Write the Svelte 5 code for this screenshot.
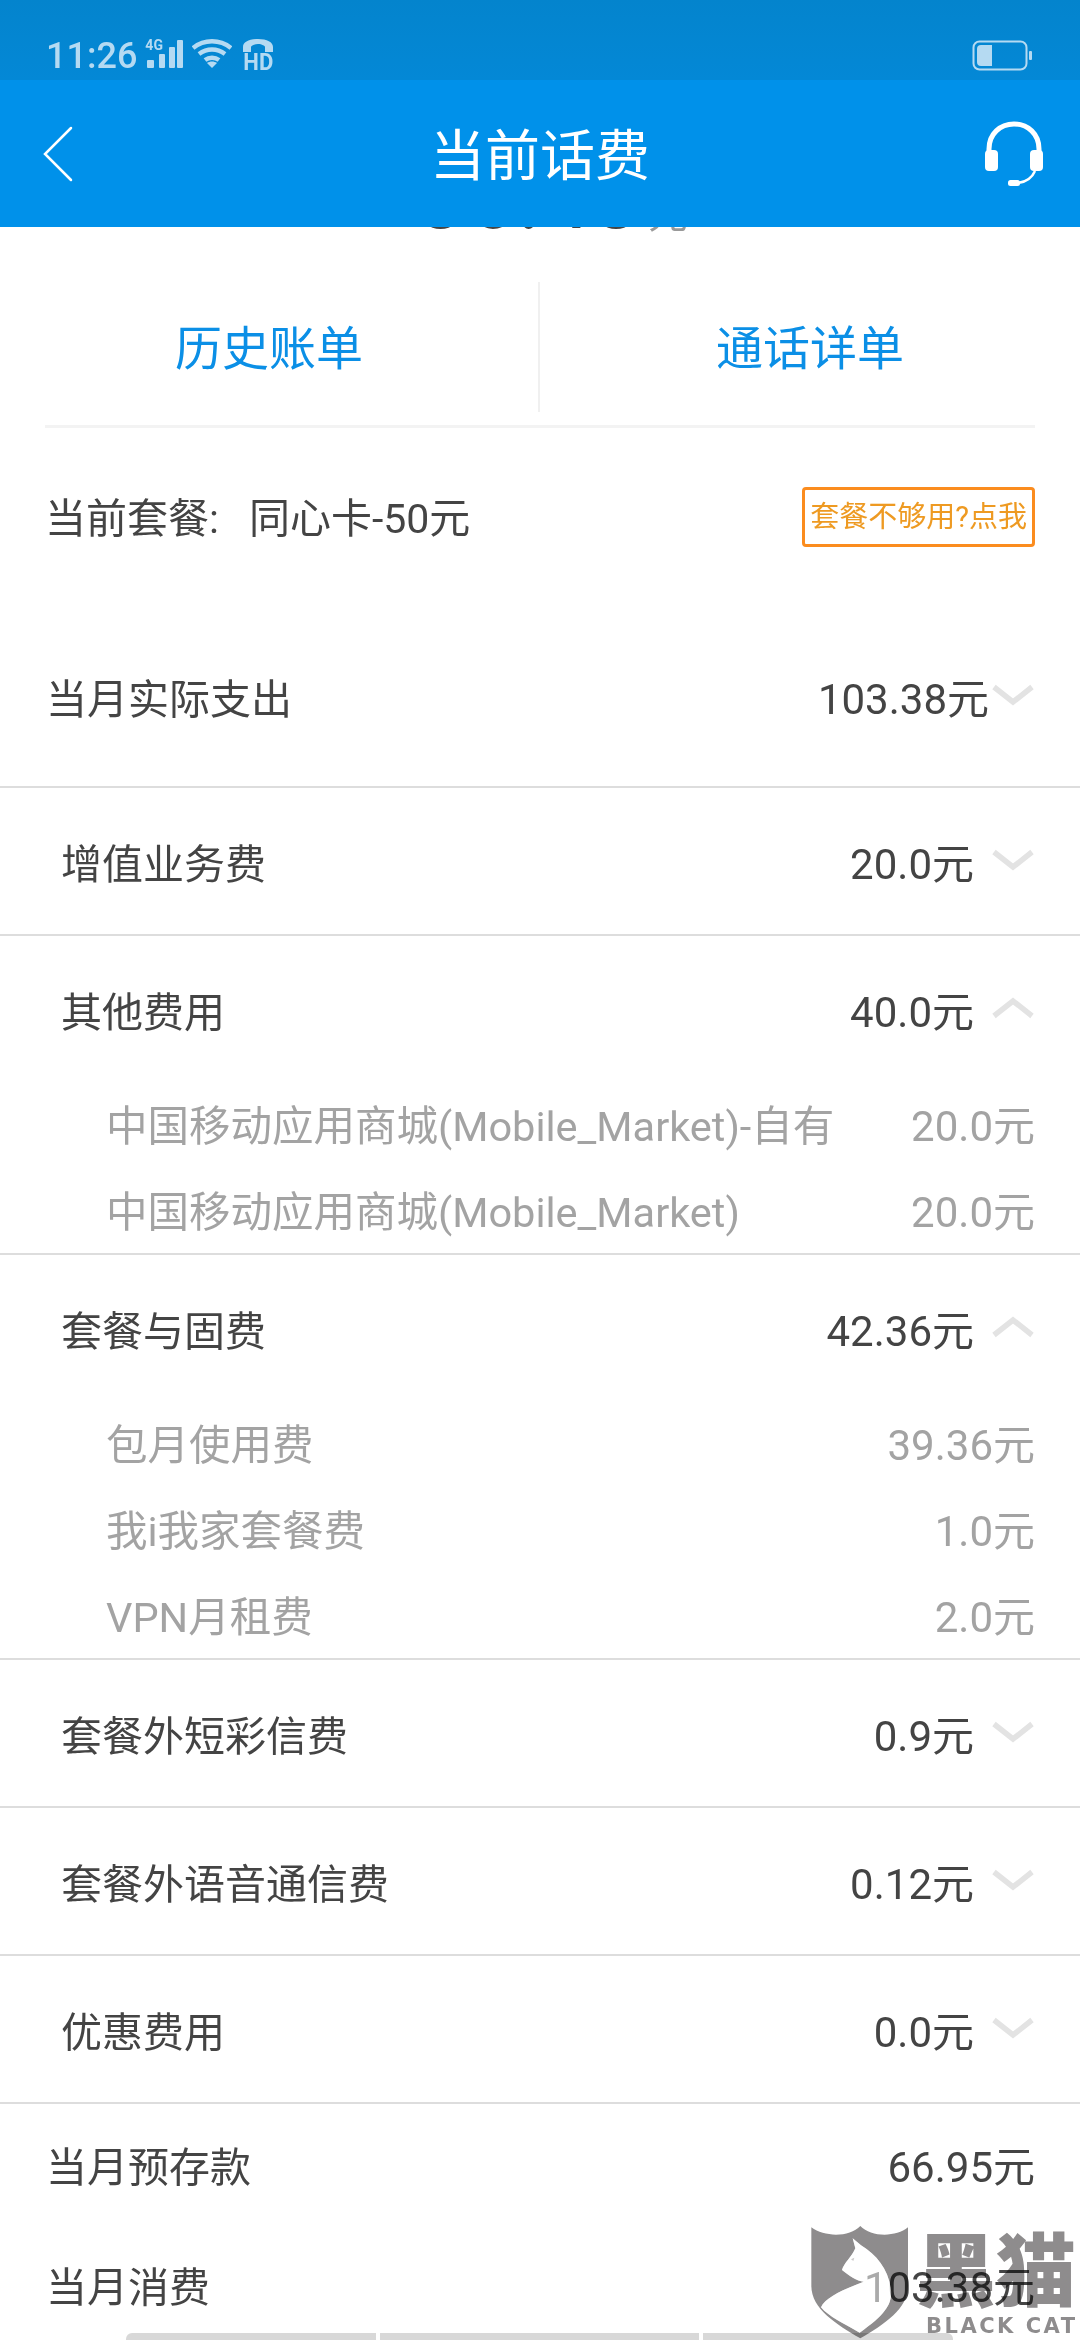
<script>
  const groups = [
    { name: '增值业务费', value: '20.0元', open: false },
    {
      name: '其他费用', value: '40.0元', open: true,
      items: [
        ['中国移动应用商城(Mobile_Market)-自有', '20.0元'],
        ['中国移动应用商城(Mobile_Market)', '20.0元'],
      ],
    },
    {
      name: '套餐与固费', value: '42.36元', open: true,
      items: [
        ['包月使用费', '39.36元'],
        ['我i我家套餐费', '1.0元'],
        ['VPN月租费', '2.0元'],
      ],
    },
    { name: '套餐外短彩信费', value: '0.9元', open: false },
    { name: '套餐外语音通信费', value: '0.12元', open: false },
    { name: '优惠费用', value: '0.0元', open: false },
  ]

  const catPath = 'M457 415L482 436C530 465 565 510 572 570C575 610 560 640 478 698C430 670 385 650 362 622C375 590 440 565 490 545C470 545 445 525 425 510C430 490 455 470 465 445Z'
</script>

{#snippet chevron(up)}
  <svg class="chev" width="44" height="24" viewBox="0 0 44 24" aria-hidden="true">
    <path d={up ? 'M3 20L22 5l19 15' : 'M3 4l19 15L41 4'} fill="none" stroke="#e3e3e3" stroke-width="5.5" />
  </svg>
{/snippet}

<div class="page">
  <div class="status">
    <span class="time">11:26</span>
    <span class="net">
      <span class="g4">4G</span>
      <svg width="36" height="28" viewBox="0 0 36 28" fill="#b5daf2" aria-hidden="true">
        <rect x="0" y="20" width="7" height="8" rx="1" />
        <rect x="12" y="14" width="6" height="14" rx="1" />
        <rect x="22" y="7" width="6" height="21" rx="1" />
        <rect x="30" y="0" width="6" height="28" rx="1" />
      </svg>
    </span>
    <svg class="wifi" width="40" height="30" viewBox="0 0 40 30" fill="none" stroke="#b5daf2" stroke-width="4.5" aria-hidden="true">
      <path d="M1 9c11-9 27-9 38 0" />
      <path d="M7 15c8-6 18-6 26 0" />
      <path d="M13 21c4-3 10-3 14 0" />
      <path d="M20 29l-5-5c3-2 7-2 10 0z" fill="#b5daf2" stroke="none" />
    </svg>
    <span class="hd">
      <svg width="30" height="13" viewBox="0 0 30 13" fill="#b5daf2" aria-hidden="true">
        <path d="M0 13V8C0 3 6 0 15 0s15 3 15 8v5h-8V8c0-1-3-3-7-3S8 7 8 8v5z" />
      </svg>
      <span>HD</span>
    </span>
    <svg class="battery" width="60" height="31" viewBox="0 0 60 31" aria-hidden="true">
      <rect x="1.5" y="1.5" width="53" height="28" rx="6" fill="none" stroke="#b5daf2" stroke-width="2" />
      <path d="M9 5h11v21H9a4 4 0 0 1-4-4V9a4 4 0 0 1 4-4z" fill="#b5daf2" />
      <rect x="57" y="11" width="3" height="9" rx="1" fill="#b5daf2" />
    </svg>
  </div>

  <header class="nav">
    <svg class="back" width="32" height="56" viewBox="0 0 32 56" fill="none" stroke="#fff" stroke-width="2.5" stroke-linecap="round" aria-hidden="true">
      <path d="M28 2L2 28l26 26" />
    </svg>
    <h1>当前话费</h1>
    <svg class="headset" width="60" height="66" viewBox="0 0 60 66" fill="#fff" aria-hidden="true">
      <path d="M5 30V28C5 13 16 3 30 3s25 10 25 25v2" fill="none" stroke="#fff" stroke-width="5" />
      <rect x="1" y="29" width="13" height="21" rx="4" />
      <rect x="46" y="29" width="13" height="21" rx="4" />
      <path d="M51 50c-3 7-9 11-17 12" fill="none" stroke="#fff" stroke-width="2.5" />
      <rect x="24" y="59" width="12" height="6" rx="2.5" />
    </svg>
  </header>

  <div class="peek"><span>36.43<small>元</small></span></div>

  <div class="tabs">
    <div class="tab">历史账单</div>
    <div class="tab">通话详单</div>
  </div>

  <div class="plan">
    <span class="plan-name"><span>当前套餐:</span><span>同心卡-50元</span></span>
    <span class="tip">套餐不够用?点我</span>
  </div>

  <div class="row total">
    <span>当月实际支出</span>
    <span class="amount">103.38元</span>
    {@render chevron(false)}
  </div>

  {#each groups as g}
    <section class="group">
      <div class="row head">
        <span>{g.name}</span>
        <span class="amount">{g.value}</span>
        {@render chevron(g.open)}
      </div>
      {#if g.items}
        <ul>
          {#each g.items as [label, val]}
            <li><span>{label}</span><span class="amount">{val}</span></li>
          {/each}
        </ul>
      {/if}
    </section>
  {/each}

  <div class="summary">
    <div><span>当月预存款</span><span class="amount">66.95元</span></div>
    <div><span>当月消费</span><span class="amount">103.38元</span></div>
  </div>

  <div class="bars"><i></i><i></i><i></i></div>

  <div class="mark" aria-hidden="true">
    <svg class="shield" width="98" height="115" viewBox="333 375 292 345">
      <path fill-rule="evenodd" d="M333 382c40 30 115 30 147-4 32 34 107 34 143 4v175c0 70-70 115-143 158-73-43-147-88-147-158z{catPath}" fill="#8e8c8d" />
      <path d="M452 478l10-5-3 10z" fill="#8e8c8d" />
    </svg>
    <svg class="cat" width="98" height="115" viewBox="333 375 292 345">
      <path d={catPath} fill="#fff" fill-opacity="0.55" />
    </svg>
    <div class="mark-text">
      <span class="cn">黑猫</span>
      <span class="en">BLACK CAT</span>
    </div>
  </div>
</div>

<style>
  :global(body) {
    margin: 0;
    background: #fff;
  }

  .page {
    position: relative;
    width: 1080px;
    height: 2340px;
    overflow: hidden;
    background: #fff;
    color: #444;
    font-family: Roboto, "Noto Sans CJK SC", sans-serif;
  }

  .status {
    height: 80px;
    box-sizing: border-box;
    padding: 36px 48px 0 46px;
    display: flex;
    align-items: flex-start;
    gap: 8px;
    background: linear-gradient(#0484cd, #0488d6);
    color: #b5daf2;
  }

  .time {
    font-size: 36px;
    line-height: 40px;
    font-weight: 500;
  }

  .net {
    position: relative;
    width: 38px;
    height: 30px;
    margin-top: 2px;
  }

  .net svg {
    position: absolute;
    right: 0;
    bottom: 0;
  }

  .g4 {
    position: absolute;
    left: 0;
    top: -1px;
    font-size: 14px;
    line-height: 16px;
    font-weight: 700;
  }

  .wifi {
    margin: 3px 0 0 1px;
  }

  .hd {
    display: flex;
    flex-direction: column;
    align-items: center;
    margin: 3px 0 0 2px;
    width: 32px;
  }

  .hd span {
    font-size: 24px;
    line-height: 20px;
    font-weight: 700;
    transform: scaleX(0.92);
  }

  .battery {
    margin: 4px 0 0 auto;
  }

  .nav {
    position: relative;
    z-index: 1;
    height: 147px;
    box-sizing: border-box;
    padding: 0 36px;
    display: grid;
    grid-template-columns: 1fr auto 1fr;
    align-items: center;
    background: #0091ea;
  }

  .back {
    margin-left: 7px;
  }

  .nav h1 {
    margin: 0 0 5px;
    font-size: 55px;
    font-weight: 400;
    color: #fff;
  }

  .headset {
    justify-self: end;
  }

  .peek {
    height: 55px;
    overflow: hidden;
    padding-left: 24px;
    text-align: center;
  }

  .peek span {
    display: block;
    margin-top: -64px;
    font-size: 90px;
    line-height: 70px;
  }

  .peek small {
    font-size: 40px;
    line-height: 40px;
    margin-left: 6px;
    color: #999;
  }

  .tabs {
    display: grid;
    grid-template-columns: 1fr 1fr;
    height: 130px;
  }

  .tab {
    display: flex;
    align-items: center;
    justify-content: center;
    padding-bottom: 5px;
    box-sizing: border-box;
    font-size: 47px;
    color: #0b8fe6;
  }

  .tab:first-child {
    border-right: 2px solid #f0f0f0;
  }

  .plan {
    margin: 13px 45px 0;
    height: 183px;
    box-sizing: border-box;
    padding-top: 59px;
    border-top: 3px solid #f3f3f3;
    display: flex;
    justify-content: space-between;
    align-items: flex-start;
  }

  .plan-name {
    display: flex;
    gap: 30px;
    padding-top: 3px;
    font-size: 41px;
    line-height: 58px;
  }

  .tip {
    box-sizing: border-box;
    height: 60px;
    padding: 3px 5px 0;
    border: 3px solid #fb8c1e;
    border-radius: 4px;
    font-size: 29px;
    line-height: 48px;
    color: #ee9a22;
  }

  .row {
    display: flex;
    align-items: center;
    font-size: 41px;
  }

  .row > span:first-child {
    flex: 1;
  }

  .amount {
    font-size: 42px;
    margin-bottom: 2px;
  }

  .chev {
    flex: none;
    margin-top: -2px;
  }

  .total {
    height: 180px;
    box-sizing: border-box;
    padding: 0 45px 2px 46px;
    border-bottom: 2px solid #ddd;
  }

  .total .amount {
    margin-right: 2px;
  }

  .head {
    height: 146px;
    padding: 0 45px 0 61px;
  }

  .head .amount {
    margin-right: 17px;
  }

  .group {
    border-bottom: 2px solid #ddd;
  }

  ul {
    list-style: none;
    margin: -2px 0 1px;
    padding: 0 45px 0 106px;
  }

  li {
    display: flex;
    justify-content: space-between;
    box-sizing: border-box;
    height: 86px;
    align-items: center;
    font-size: 41.5px;
    color: #a3a3a3;
  }

  .summary {
    padding: 0 45px 0 46px;
    font-size: 41px;
  }

  .summary div {
    display: flex;
    justify-content: space-between;
    align-items: center;
    height: 120px;
  }

  .bars {
    position: absolute;
    left: 126px;
    bottom: 0;
    display: flex;
    gap: 4px;
    height: 7px;
  }

  .bars i {
    display: block;
    background: #d8d8d8;
  }

  .bars i:nth-child(1) { width: 250px; border-radius: 6px 0 0 0; }
  .bars i:nth-child(2) { width: 319px; }
  .bars i:nth-child(3) { width: 250px; border-radius: 0 6px 0 0; }

  .mark {
    position: absolute;
    left: 811px;
    top: 2225px;
    display: flex;
    gap: 7px;
  }

  .shield {
    mix-blend-mode: multiply;
  }

  .cat {
    position: absolute;
    left: 0;
    top: 0;
  }

  .mark-text {
    display: flex;
    flex-direction: column;
    color: #8e8c8d;
    white-space: nowrap;
    mix-blend-mode: multiply;
  }

  .cn {
    margin-top: 6px;
    font-size: 80px;
    line-height: 84px;
    font-weight: 900;
  }

  .en {
    font-family: "DejaVu Sans", sans-serif;
    margin-left: 10px;
    font-size: 21px;
    line-height: 22px;
    font-weight: 700;
    letter-spacing: 2.5px;
  }
</style>
